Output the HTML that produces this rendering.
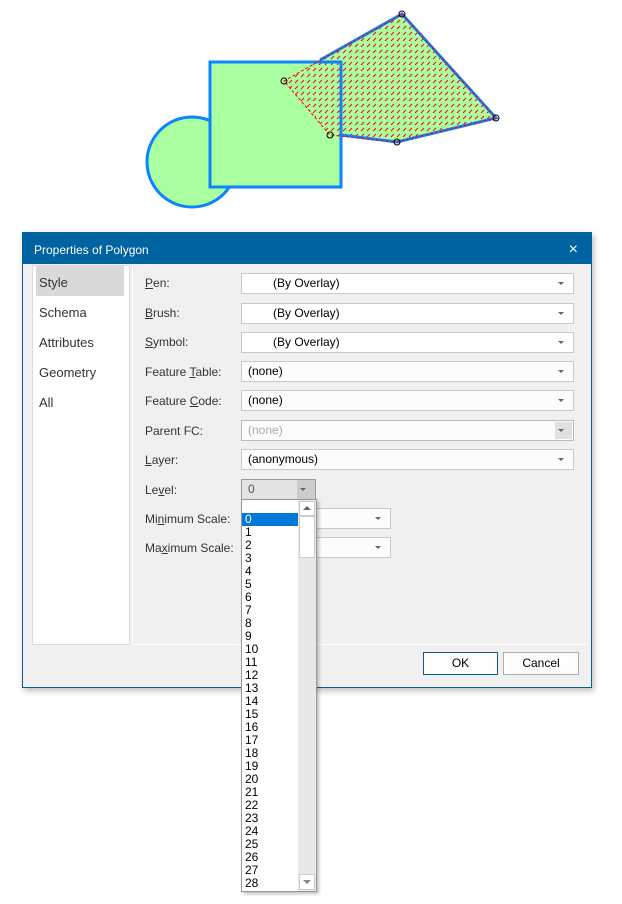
<!DOCTYPE html>
<html><head><style>
*{margin:0;padding:0;box-sizing:border-box}
body{width:622px;height:904px;background:#fff;position:relative;overflow:hidden;font-family:"Liberation Sans",sans-serif;font-size:12px;color:#000}
.a{position:absolute}
.lbl{position:absolute;left:145px;color:#333;font-size:12px}
.cb{position:absolute;left:241px;width:333px;height:21px;border:1px solid #c8c8c8;background:#fcfcfc;font-size:12px;line-height:19px;padding-left:6px}
.cb.w{background:#fff}
.cb:after{content:"";position:absolute;right:9px;top:8px;border-left:3px solid transparent;border-right:3px solid transparent;border-top:3px solid #666}
.nav{position:absolute;left:39px;font-size:13px;color:#333}
.it{height:13px;line-height:13px;font-size:12px;padding-left:3px}
</style></head><body>
<svg class="a" style="left:0;top:0" width="622" height="215">
<defs><pattern id="h" width="6" height="6" patternUnits="userSpaceOnUse"><path d="M1 5 L4 2" stroke="#f00" stroke-width="1"/></pattern></defs>
<circle cx="192" cy="162" r="45" fill="#aaffa0" stroke="#0a84ff" stroke-width="3"/>
<rect x="210" y="62" width="131" height="125" fill="#aaffa0" stroke="#0a84ff" stroke-width="3"/>
<polygon points="402,14 496,118 397,142 330,135 284,81" fill="#aaffa0"/>
<polygon points="402,14 496,118 397,142 330,135 284,81" fill="url(#h)"/>
<polyline points="320,60 402,14 496,118 397,142 341,135" fill="none" stroke="#0a84ff" stroke-width="3"/>
<rect x="210" y="62" width="131" height="125" fill="none" stroke="#0a84ff" stroke-width="3"/>
<polygon points="402,14 496,118 397,142 330,135 284,81" fill="none" stroke="#f00" stroke-width="1" stroke-dasharray="3,2"/>
<g fill="none" stroke="#000" stroke-width="1"><circle cx="402" cy="14" r="3"/><circle cx="496" cy="118" r="3"/><circle cx="397" cy="142" r="3"/><circle cx="330" cy="135" r="3"/><circle cx="284" cy="81" r="3"/></g>
</svg>
<div class="a" style="left:22px;top:232px;width:570px;height:456px;background:#f0f0f0;border:1px solid #0d5a8c;box-shadow:2px 3px 6px rgba(0,0,0,.25)"></div>
<div class="a" style="left:22px;top:232px;width:570px;height:32px;background:#0063a1;color:#fff;font-size:12px;line-height:36px;padding-left:12px">Properties of Polygon<span class="a" style="right:14px;top:0;font-size:16px">×</span></div>
<div class="a" style="left:32px;top:265px;width:98px;height:380px;background:#fff;border:1px solid #dcdcdc"></div>
<div class="a" style="left:36px;top:266px;width:88px;height:30px;background:#d9d9d9"></div>
<div class="nav" style="top:275px">Style</div>
<div class="nav" style="top:305px">Schema</div>
<div class="nav" style="top:335px">Attributes</div>
<div class="nav" style="top:365px">Geometry</div>
<div class="nav" style="top:395px">All</div>
<div class="a" style="left:132px;top:265px;width:456px;height:380px;border-left:1px solid #fff;border-bottom:1px solid #fff"></div>
<div class="lbl" style="top:276px"><u>P</u>en:</div>
<div class="lbl" style="top:306px"><u>B</u>rush:</div>
<div class="lbl" style="top:335px"><u>S</u>ymbol:</div>
<div class="lbl" style="top:365px">Feature <u>T</u>able:</div>
<div class="lbl" style="top:394px">Feature <u>C</u>ode:</div>
<div class="lbl" style="top:424px">Parent FC:</div>
<div class="lbl" style="top:453px"><u>L</u>ayer:</div>
<div class="lbl" style="top:483px">Le<u>v</u>el:</div>
<div class="lbl" style="top:512px">Mi<u>n</u>imum Scale:</div>
<div class="lbl" style="top:541px">Ma<u>x</u>imum Scale:</div>
<div class="cb w" style="top:273px;padding-left:31px">(By Overlay)</div>
<div class="cb w" style="top:303px;padding-left:31px">(By Overlay)</div>
<div class="cb w" style="top:332px;padding-left:31px">(By Overlay)</div>
<div class="cb" style="top:361px">(none)</div>
<div class="cb" style="top:390px">(none)</div>
<div class="cb" style="top:420px;color:#aaa;border-color:#bbb">(none)<span class="a" style="right:1px;top:1px;width:17px;height:17px;background:#e0e0e0"></span></div>
<div class="cb" style="top:449px">(anonymous)</div>
<div class="cb" style="top:508px;width:150px"></div>
<div class="cb" style="top:537px;width:150px"></div>
<div class="cb" style="top:479px;width:75px;background:#e3e3e3;border-color:#999;color:#555">0<span class="a" style="right:0;top:0;width:18px;height:19px;background:#ccc"></span></div>
<div class="a" style="left:423px;top:652px;width:75px;height:23px;border:1px solid #0d5a8c;background:#fdfdfd;text-align:center;line-height:21px">OK</div>
<div class="a" style="left:503px;top:652px;width:76px;height:23px;border:1px solid #adadad;background:#fdfdfd;text-align:center;line-height:21px">Cancel</div>
<div class="a" style="left:241px;top:499px;width:76px;height:393px;background:#fff;border:1px solid #999;box-shadow:2px 2px 3px rgba(0,0,0,.25)">
<div class="a" style="left:56px;top:0;width:18px;height:391px;background:#e8e8e8"></div>
<div class="a" style="left:57px;top:1px;width:16px;height:15px;background:#fff;border:1px solid #ccc"></div>
<div class="a" style="left:61px;top:6px;border-left:4px solid transparent;border-right:4px solid transparent;border-bottom:4px solid #666"></div>
<div class="a" style="left:57px;top:16px;width:16px;height:42px;background:#fff;border:1px solid #ccc"></div>
<div class="a" style="left:57px;top:374px;width:16px;height:16px;background:#fff;border:1px solid #ccc"></div>
<div class="a" style="left:61px;top:380px;border-left:4px solid transparent;border-right:4px solid transparent;border-top:4px solid #888"></div>
<div class="a" style="left:0;top:13px;width:56px">
<div class="it" style="background:#0078d7;color:#fff">0</div>
<div class="it">1</div><div class="it">2</div><div class="it">3</div><div class="it">4</div><div class="it">5</div><div class="it">6</div><div class="it">7</div><div class="it">8</div><div class="it">9</div><div class="it">10</div><div class="it">11</div><div class="it">12</div><div class="it">13</div><div class="it">14</div><div class="it">15</div><div class="it">16</div><div class="it">17</div><div class="it">18</div><div class="it">19</div><div class="it">20</div><div class="it">21</div><div class="it">22</div><div class="it">23</div><div class="it">24</div><div class="it">25</div><div class="it">26</div><div class="it">27</div><div class="it">28</div>
</div></div>
</body></html>
